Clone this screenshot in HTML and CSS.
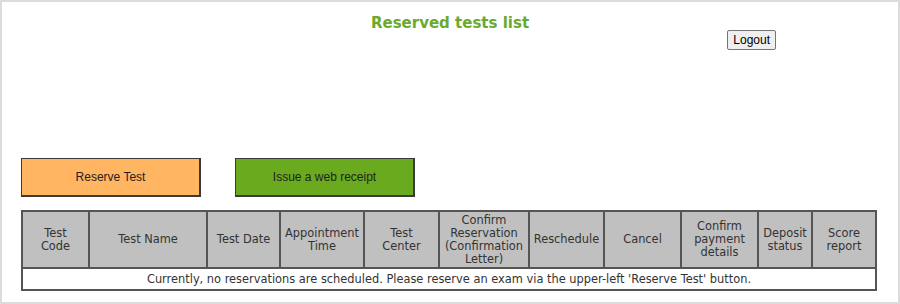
FILE: index.html
```html
<!DOCTYPE html>
<html>
<head>
<meta charset="utf-8">
<link rel="stylesheet" href="styles.css">
</head>
<body>
<div class="frame">
  <h1 class="title">Reserved tests list</h1>
  <div class="logout-row"><button class="logout">Logout</button></div>
  <div class="actions">
    <button class="action reserve">Reserve Test</button>
    <button class="action receipt">Issue a web receipt</button>
  </div>
  <table class="list" cellspacing="0">
    <colgroup>
      <col style="width:67px"><col style="width:118px"><col style="width:73px"><col style="width:84px"><col style="width:75px"><col style="width:90px"><col style="width:75px"><col style="width:77px"><col style="width:77px"><col style="width:54px"><col style="width:64px">
    </colgroup>
    <thead>
      <tr>
        <th>Test<br>Code</th>
        <th>Test Name</th>
        <th>Test Date</th>
        <th>Appointment<br>Time</th>
        <th>Test<br>Center</th>
        <th>Confirm<br>Reservation<br>(Confirmation<br>Letter)</th>
        <th>Reschedule</th>
        <th>Cancel</th>
        <th>Confirm<br>payment<br>details</th>
        <th>Deposit<br>status</th>
        <th>Score<br>report</th>
      </tr>
    </thead>
    <tbody>
      <tr><td colspan="11" class="empty">Currently, no reservations are scheduled. Please reserve an exam via the upper-left 'Reserve Test' button.</td></tr>
    </tbody>
  </table>
</div>
</body>
</html>
```
FILE: styles.css
```css
html, body { margin: 0; padding: 0; background: #fff; }
.frame {
  box-sizing: border-box;
  width: 900px;
  height: 304px;
  border: 2px solid #dcdcdc;
  padding: 11px 19px 0 19px;
  font-family: "DejaVu Sans", Verdana, sans-serif;
}
.title {
  margin: 0;
  text-align: center;
  font-size: 15px;
  font-weight: bold;
  color: #6aaa2c;
  line-height: 20px;
}
.logout-row {
  display: flex;
  justify-content: flex-end;
  padding-right: 103px;
  margin-top: -3px;
}
.logout {
  font-family: "Liberation Sans", Arial, sans-serif;
  font-size: 12px;
  height: 20px;
  padding: 0 5px;
  background: #efefef;
  border: 1px solid #767676;
  border-radius: 2px;
  color: #000;
}
.actions {
  display: flex;
  gap: 34px;
  margin-top: 108px;
}
.action {
  width: 180px;
  height: 39px;
  border: 1px solid #3a3a3a;
  border-right-width: 2px;
  border-bottom-width: 2px;
  font-family: "Liberation Sans", Arial, sans-serif;
  font-size: 12px;
  color: #222;
  padding: 0;
}
.reserve { background: #ffb562; }
.receipt { background: #6aaa1e; }
.list {
  margin-top: 13px;
  table-layout: fixed;
  width: 855px;
  border: 1px solid #555;
  border-collapse: separate;
  font-size: 11.4px;
}
.list th, .list td {
  border: 1px solid #555;
  padding: 0 1px;
  text-align: center;
  line-height: 13px;
  color: #333;
}
.list th {
  background: #c0c0c0;
  font-weight: normal;
  height: 55px;
}
.list td.empty {
  background: #fff;
  height: 20px;
}
```
